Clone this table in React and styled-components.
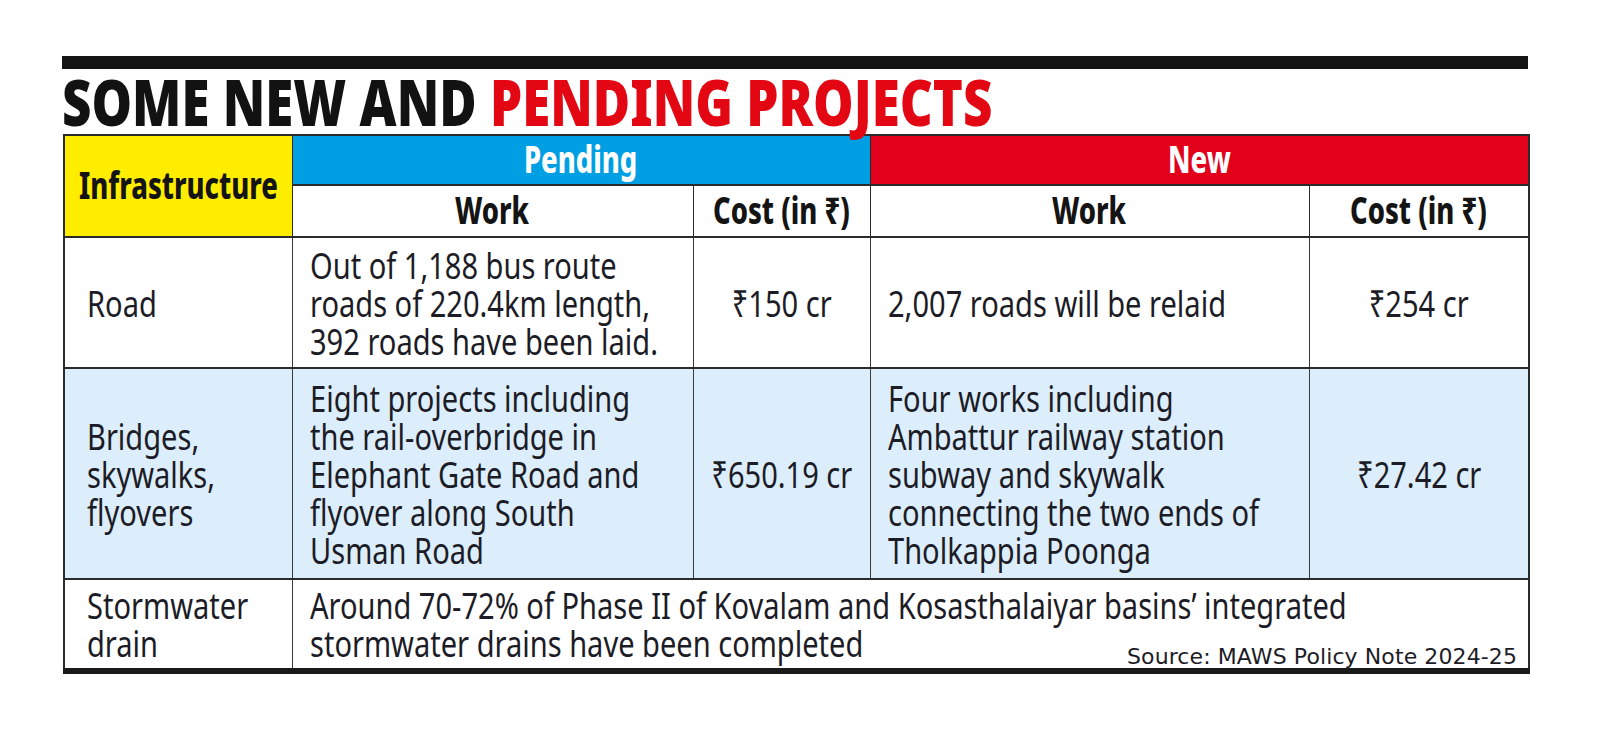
import React from 'react';
import styled, { createGlobalStyle } from 'styled-components';

const SANS = '"Noto Sans", "Open Sans", "Liberation Sans", sans-serif';

const GlobalStyle = createGlobalStyle`
  html, body {
    margin: 0;
    padding: 0;
    background: #ffffff;
  }
  body {
    font-family: ${SANS};
    color: #1c1c26;
  }
`;

// condensed look: the newspaper face is narrow, none installed is, so squeeze it
const Squeeze = styled.span`
  display: inline-block;
  transform: scaleX(${(p) => p.$x});
  transform-origin: ${(p) => (p.$center ? 'center' : 'left')} center;
  margin: ${(p) => (p.$center ? '0 -80px' : '0')};
`;

const Page = styled.div`
  padding: 56px 0 0 62px;
  width: 1466px;
`;

const TopRule = styled.div`
  height: 13px;
  background: #141414;
`;

const Title = styled.h1`
  margin: 0;
  height: 65px;
  line-height: 65px;
  font-family: ${SANS};
  font-weight: 900;
  font-size: 63px;
  color: #121212;
  white-space: nowrap;
`;

const Accent = styled.span`
  color: #e30613;
`;

const Table = styled.table`
  width: 1465px;
  margin-left: 1px;
  border-collapse: collapse;
  table-layout: fixed;
  border-top: 2px solid #2b2b2b;
  border-bottom: 6px solid #1a1a1a;
  border-left: 2px solid #2b2b2b;
  border-right: 2px solid #2b2b2b;
`;

const Col = styled.col`
  width: ${(p) => p.$w}px;
`;

const HeadCell = styled.th`
  box-sizing: border-box;
  height: ${(p) => p.$h}px;
  padding: 0 0 4px;
  background: ${(p) => p.$bg || '#ffffff'};
  color: ${(p) => p.$color || '#141414'};
  font-family: ${SANS};
  font-weight: 800;
  font-size: 37px;
  line-height: 1;
  text-align: center;
  vertical-align: middle;
  white-space: nowrap;
  border: 2px solid #2b2b2b;
  border-left-width: 1px;
  border-right-width: 1px;
`;

const Row = styled.tr`
  background: ${(p) => (p.$tint ? '#dcedfb' : '#ffffff')};
`;

const Cell = styled.td`
  height: ${(p) => p.$h}px;
  padding: 0 6px 0 ${(p) => p.$pl ?? 17}px;
  font-size: 37px;
  line-height: 38px;
  text-align: ${(p) => (p.$center ? 'center' : 'left')};
  vertical-align: middle;
  white-space: nowrap;
  border-top: 2px solid #2b2b2b;
  border-bottom: 2px solid #2b2b2b;
  border-left: 1px solid #3a3a3a;
  border-right: 1px solid #3a3a3a;
`;

const NoteCell = styled(Cell)`
  position: relative;
  vertical-align: top;
  padding-top: 6px;
`;

const Source = styled.span`
  position: absolute;
  right: 11px;
  bottom: -1px;
  font-family: "DejaVu Sans", sans-serif;
  font-size: 22px;
  line-height: 24px;
  letter-spacing: 0.1px;
  color: #1c1c26;
`;

const COLS = [228, 401, 177, 439, 220];
const BODY_X = 0.785;
const HEAD_X = 0.74;

const ROWS = [
  {
    name: 'Road',
    tint: false,
    h: 129,
    pendingWork: ['Out of 1,188 bus route', 'roads of 220.4km length,', '392 roads have been laid.'],
    pendingCost: '₹150 cr',
    newWork: ['2,007 roads will be relaid'],
    newCost: '₹254 cr',
  },
  {
    name: 'Bridges,\nskywalks,\nflyovers',
    tint: true,
    h: 209,
    pendingWork: [
      'Eight projects including',
      'the rail-overbridge in',
      'Elephant Gate Road and',
      'flyover along South',
      'Usman Road',
    ],
    pendingCost: '₹650.19 cr',
    newWork: [
      'Four works including',
      'Ambattur railway station',
      'subway and skywalk',
      'connecting the two ends of',
      'Tholkappia Poonga',
    ],
    newCost: '₹27.42 cr',
  },
];

const Lines = ({ lines, center }) => (
  <Squeeze $x={BODY_X} $center={center}>
    {lines.map((line, i) => (
      <React.Fragment key={line}>
        {i > 0 && <br />}
        {line}
      </React.Fragment>
    ))}
  </Squeeze>
);

const Head = ({ children }) => (
  <Squeeze $x={HEAD_X} $center>
    {children}
  </Squeeze>
);

export default function App() {
  return (
    <>
      <GlobalStyle />
      <Page>
        <TopRule />
        <Title>
          <Squeeze $x={0.81}>
            SOME NEW AND <Accent>PENDING PROJECTS</Accent>
          </Squeeze>
        </Title>
        <Table>
          <colgroup>
            {COLS.map((w, i) => (
              <Col key={i} $w={w} />
            ))}
          </colgroup>
          <thead>
            <tr>
              <HeadCell rowSpan={2} $bg="#ffed00">
                <Head>Infrastructure</Head>
              </HeadCell>
              <HeadCell colSpan={2} $h={50} $bg="#009fe3" $color="#ffffff">
                <Head>Pending</Head>
              </HeadCell>
              <HeadCell colSpan={2} $h={50} $bg="#e2001a" $color="#ffffff">
                <Head>New</Head>
              </HeadCell>
            </tr>
            <tr>
              <HeadCell $h={52}>
                <Head>Work</Head>
              </HeadCell>
              <HeadCell $h={52}>
                <Head>Cost (in ₹)</Head>
              </HeadCell>
              <HeadCell $h={52}>
                <Head>Work</Head>
              </HeadCell>
              <HeadCell $h={52}>
                <Head>Cost (in ₹)</Head>
              </HeadCell>
            </tr>
          </thead>
          <tbody>
            {ROWS.map((row) => (
              <Row key={row.name} $tint={row.tint}>
                <Cell $h={row.h} $pl={22}>
                  <Lines lines={row.name.split('\n')} />
                </Cell>
                <Cell $h={row.h}>
                  <Lines lines={row.pendingWork} />
                </Cell>
                <Cell $h={row.h} $center $pl={6}>
                  <Lines lines={[row.pendingCost]} center />
                </Cell>
                <Cell $h={row.h}>
                  <Lines lines={row.newWork} />
                </Cell>
                <Cell $h={row.h} $center $pl={6}>
                  <Lines lines={[row.newCost]} center />
                </Cell>
              </Row>
            ))}
            <Row>
              <Cell $h={88} $pl={22}>
                <Lines lines={['Stormwater', 'drain']} />
              </Cell>
              <NoteCell colSpan={4} $h={82}>
                <Lines
                  lines={[
                    'Around 70-72% of Phase II of Kovalam and Kosasthalaiyar basins’ integrated',
                    'stormwater drains have been completed',
                  ]}
                />
                <Source>Source: MAWS Policy Note 2024-25</Source>
              </NoteCell>
            </Row>
          </tbody>
        </Table>
      </Page>
    </>
  );
}
